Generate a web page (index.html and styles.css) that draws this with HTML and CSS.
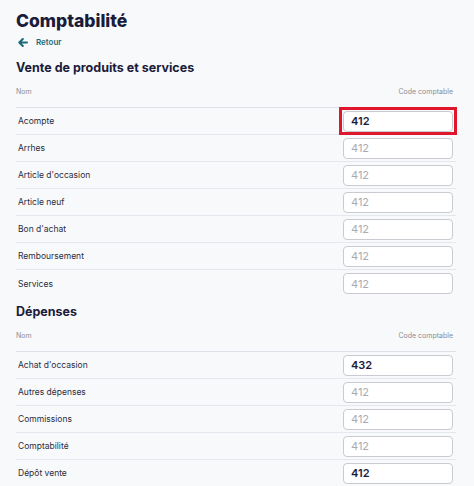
FILE: index.html
```html
<!DOCTYPE html>
<html lang="fr">
<head>
<meta charset="utf-8">
<link rel="stylesheet" href="styles.css">
</head>
<body>
<div class="page">
  <h1 class="title">Comptabilité</h1>
  <a class="back" href="#">
    <svg class="back-icon" width="10" height="9" viewBox="0 0 10 9"><path d="M9 4.5H2M4.8 1L1.3 4.5 4.8 8" fill="none" stroke="#1c6a78" stroke-width="2" stroke-linecap="round" stroke-linejoin="round"/></svg>
    <span>Retour</span>
  </a>

  <section class="section">
    <h2 class="section-title">Vente de produits et services</h2>
    <div class="thead"><span>Nom</span><span>Code comptable</span></div>
    <div class="row"><span class="label">Acompte</span><span class="highlight"><input class="code filled" value="412"></span></div>
    <div class="row"><span class="label">Arrhes</span><input class="code" placeholder="412"></div>
    <div class="row"><span class="label">Article d'occasion</span><input class="code" placeholder="412"></div>
    <div class="row"><span class="label">Article neuf</span><input class="code" placeholder="412"></div>
    <div class="row"><span class="label">Bon d'achat</span><input class="code" placeholder="412"></div>
    <div class="row"><span class="label">Remboursement</span><input class="code" placeholder="412"></div>
    <div class="row last"><span class="label">Services</span><input class="code" placeholder="412"></div>
  </section>

  <section class="section">
    <h2 class="section-title">Dépenses</h2>
    <div class="thead"><span>Nom</span><span>Code comptable</span></div>
    <div class="row"><span class="label">Achat d'occasion</span><input class="code filled" value="432"></div>
    <div class="row"><span class="label">Autres dépenses</span><input class="code" placeholder="412"></div>
    <div class="row"><span class="label">Commissions</span><input class="code" placeholder="412"></div>
    <div class="row"><span class="label">Comptabilité</span><input class="code" placeholder="412"></div>
    <div class="row"><span class="label">Dépôt vente</span><input class="code filled" value="412"></div>
  </section>
</div>
</body>
</html>
```
FILE: styles.css
```css
html, body {
  margin: 0;
  padding: 0;
  background: #f8f9fb;
}
body {
  font-family: Inter, "Noto Sans", sans-serif;
  color: #22223a;
}
.page {
  padding: 10px 18px 0 16px;
}
.title {
  margin: 0;
  font-size: 17.5px;
  line-height: 22px;
  font-weight: 800;
  color: #1b1b3a;
}
.back {
  display: flex;
  align-items: center;
  gap: 8px;
  margin: 4px 0 0 2px;
  text-decoration: none;
  color: #1c6a78;
  font-size: 8px;
  font-weight: 600;
  line-height: 12px;
}
.back-icon {
  display: block;
}
.section-title {
  margin: 12px 0 0;
  font-size: 12.5px;
  line-height: 16px;
  font-weight: 700;
  color: #1b1b3a;
}
.section + .section .section-title {
  margin-top: 7px;
}
.thead {
  display: flex;
  justify-content: space-between;
  align-items: center;
  height: 32px;
  padding: 0 3px 0 0;
  font-size: 7px;
  color: #8a8d96;
  border-bottom: 1px solid #dde1e8;
  box-sizing: border-box;
}
.row {
  display: flex;
  justify-content: space-between;
  align-items: center;
  height: 27px;
  padding: 0 3px 0 2px;
  border-bottom: 1px solid #e4e7ed;
  box-sizing: border-box;
}
.row.last {
  border-bottom: none;
}
.label {
  font-size: 8.5px;
  color: #2c2c3c;
}
.code {
  display: block;
  width: 110px;
  height: 21px;
  box-sizing: border-box;
  border: 1px solid #c9cbd0;
  border-radius: 4px;
  background: #fff;
  padding: 0 7px;
  font-family: Inter, "Noto Sans", sans-serif;
  font-size: 11px;
  color: #1b1b3a;
  outline: none;
}
.code::placeholder {
  color: #a9abb0;
}
.code.filled {
  font-weight: 600;
}
.highlight {
  position: relative;
  display: block;
}
.highlight::after {
  content: "";
  position: absolute;
  left: -4px;
  right: -4px;
  top: -4px;
  bottom: -3px;
  border: 3px solid #e0172c;
  pointer-events: none;
}
```
